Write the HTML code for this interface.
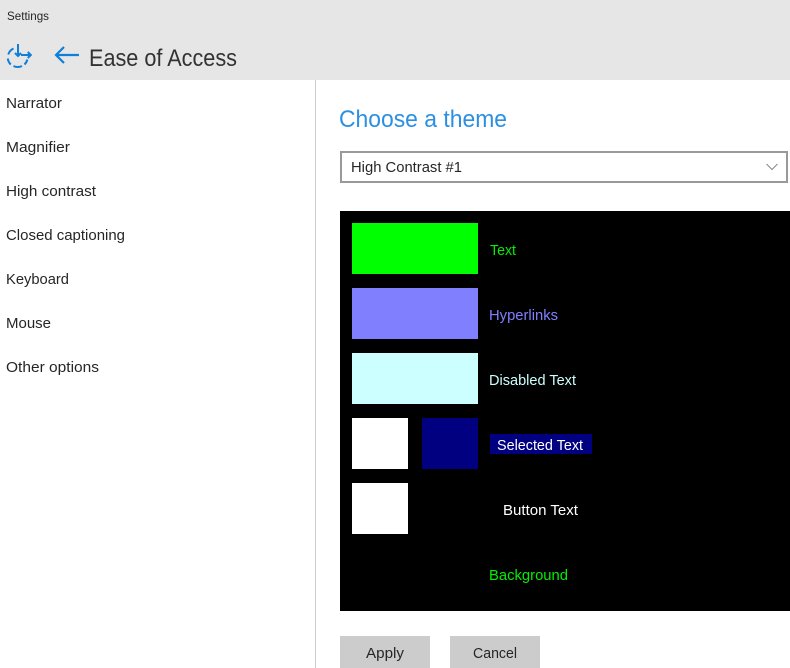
<!DOCTYPE html>
<html>
<head>
<meta charset="utf-8">
<style>
html,body{margin:0;padding:0;background:#fff;width:790px;height:668px;overflow:hidden}
svg{display:block}
text{font-family:"Liberation Sans",sans-serif;font-size:15px;fill:#262626}
.w{fill:#fff}
.g{fill:#00f000}
</style>
</head>
<body>
<svg width="790" height="668" viewBox="0 0 790 668" xmlns="http://www.w3.org/2000/svg">
<rect x="0" y="0" width="790" height="80" fill="#e6e6e6"/>
<rect x="315" y="80" width="1" height="588" fill="#cccccc"/>

<text x="7" y="20" style="font-size:11.5px" textLength="42" lengthAdjust="spacingAndGlyphs">Settings</text>

<!-- history icon -->
<g fill="none" stroke="#0f7fd8" stroke-width="2">
<path d="M13.500 48.500A9.800 9.800 0 0 0 8.300 54.500"/>
<path d="M7.800 58.500A9.800 9.800 0 0 0 10.800 64.500"/>
<path d="M13.500 66A9.800 9.800 0 0 0 22 66"/>
<path d="M24.500 64.500A9.800 9.800 0 0 0 27.300 59.500"/>
<path d="M18 44V56"/>
<path d="M15 53L18 56L21 53"/>
<path d="M21 55H30.500"/>
<path d="M27.800 52L30.800 55L27.800 58"/>
</g>
<!-- back arrow -->
<g fill="none" stroke="#0f7fd8" stroke-width="2.200">
<path d="M56 55H79"/>
<path d="M64 47L56 55L64 63"/>
</g>
<text x="89" y="66" style="font-size:24px;fill:#333" textLength="148" lengthAdjust="spacingAndGlyphs">Ease of Access</text>

<text x="6" y="108" textLength="56" lengthAdjust="spacingAndGlyphs">Narrator</text>
<text x="6" y="152" textLength="64" lengthAdjust="spacingAndGlyphs">Magnifier</text>
<text x="6" y="196" textLength="90" lengthAdjust="spacingAndGlyphs">High contrast</text>
<text x="6" y="240" textLength="119" lengthAdjust="spacingAndGlyphs">Closed captioning</text>
<text x="6" y="284" textLength="63" lengthAdjust="spacingAndGlyphs">Keyboard</text>
<text x="6" y="328" textLength="45" lengthAdjust="spacingAndGlyphs">Mouse</text>
<text x="6" y="372" textLength="93" lengthAdjust="spacingAndGlyphs">Other options</text>

<text x="339" y="127" style="font-size:24px;fill:#2b90e2" textLength="168" lengthAdjust="spacingAndGlyphs">Choose a theme</text>

<rect x="341" y="152" width="446" height="30" fill="#fff" stroke="#999999" stroke-width="2"/>
<text x="351" y="172" textLength="111" lengthAdjust="spacingAndGlyphs">High Contrast #1</text>
<path d="M766.500 164L772 169.500L777.500 164" fill="none" stroke="#888" stroke-width="1"/>

<rect x="340" y="211" width="450" height="400" fill="#000"/>
<rect x="352" y="223" width="126" height="51" fill="#00ff00"/>
<rect x="352" y="288" width="126" height="51" fill="#8080ff"/>
<rect x="352" y="353" width="126" height="51" fill="#ccffff"/>
<rect x="352" y="418" width="56" height="51" fill="#fff"/>
<rect x="422" y="418" width="56" height="51" fill="#000080"/>
<rect x="352" y="483" width="56" height="51" fill="#fff"/>
<rect x="490" y="434" width="102" height="20" fill="#000080"/>

<text x="490" y="255" class="g" textLength="26" lengthAdjust="spacingAndGlyphs">Text</text>
<text x="489" y="320" style="fill:#8080ff" textLength="69" lengthAdjust="spacingAndGlyphs">Hyperlinks</text>
<text x="489" y="385" style="fill:#ccffff" textLength="87" lengthAdjust="spacingAndGlyphs">Disabled Text</text>
<text x="497" y="450" class="w" textLength="86" lengthAdjust="spacingAndGlyphs">Selected Text</text>
<text x="503" y="515" class="w" textLength="75" lengthAdjust="spacingAndGlyphs">Button Text</text>
<text x="489" y="580" class="g" textLength="79" lengthAdjust="spacingAndGlyphs">Background</text>

<rect x="340" y="636" width="90" height="32" fill="#cccccc"/>
<rect x="450" y="636" width="90" height="32" fill="#cccccc"/>
<text x="366" y="658" textLength="38" lengthAdjust="spacingAndGlyphs">Apply</text>
<text x="473" y="658" textLength="44" lengthAdjust="spacingAndGlyphs">Cancel</text>
</svg>
</body>
</html>
